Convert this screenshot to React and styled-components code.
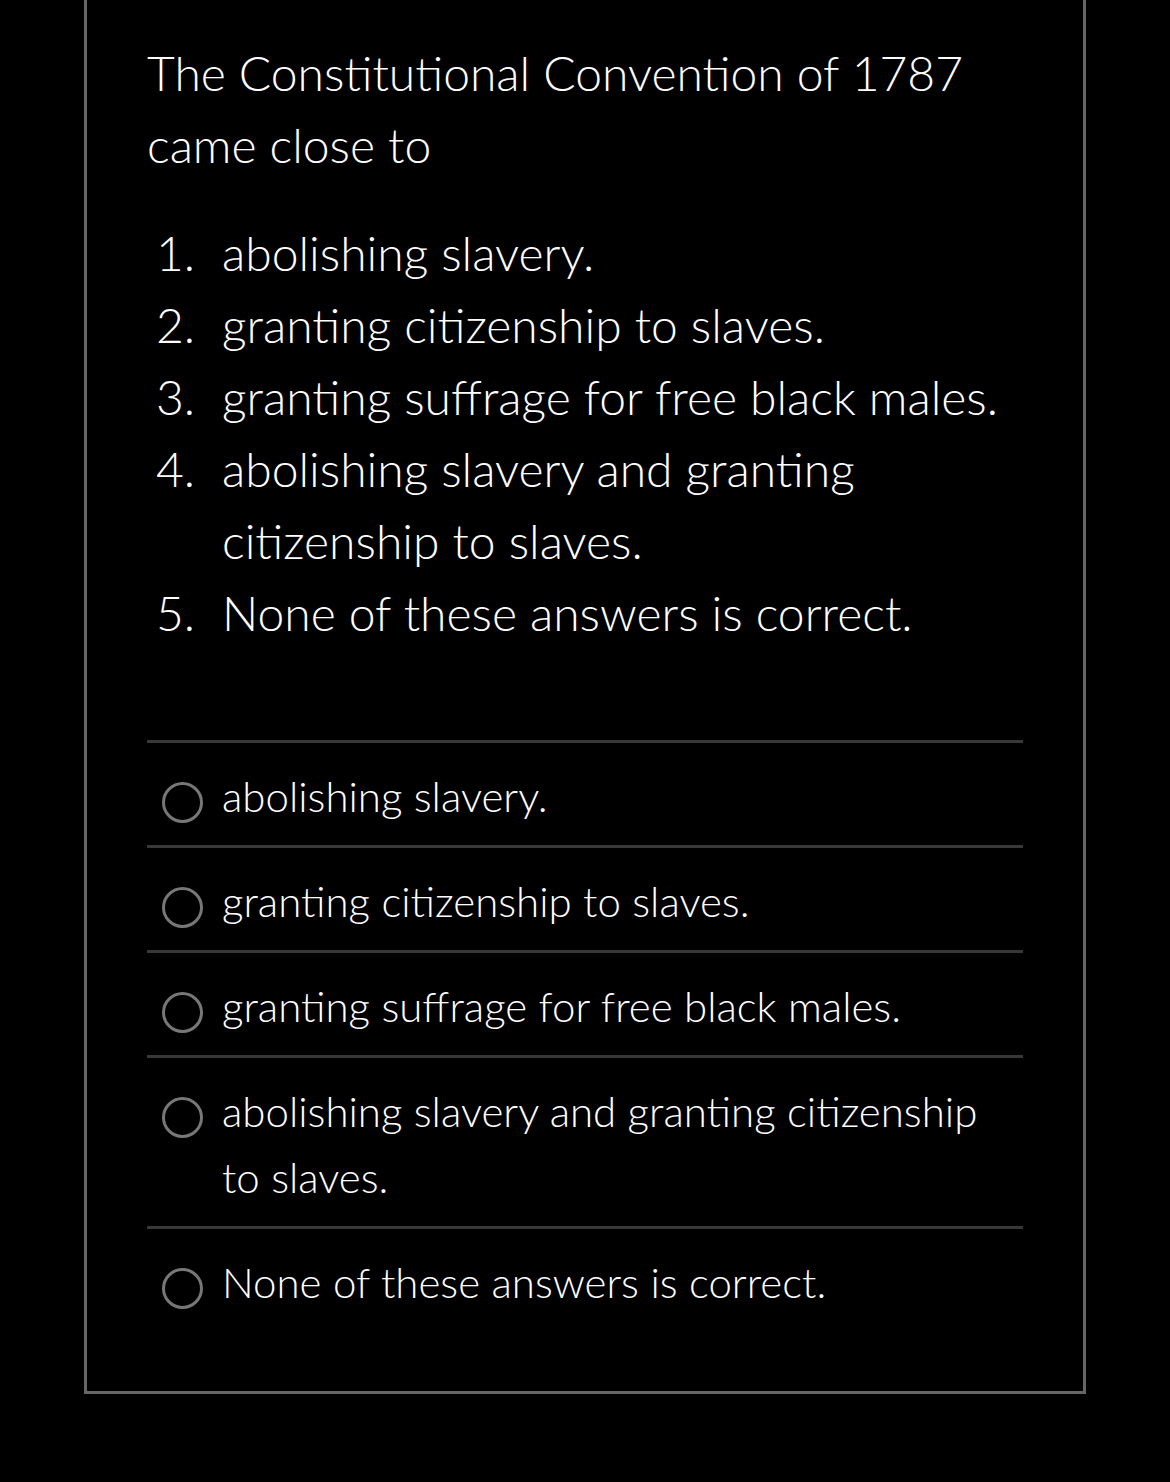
import styled, { createGlobalStyle } from 'styled-components';

const GlobalStyle = createGlobalStyle`
  html, body {
    margin: 0;
    padding: 0;
    background: #000;
  }
  body {
    font-family: "Lato Light", Lato, "Open Sans", sans-serif;
    color: #fff;
  }
`;

const items = [
  'abolishing slavery.',
  'granting citizenship to slaves.',
  'granting suffrage for free black males.',
  'abolishing slavery and granting citizenship to slaves.',
  'None of these answers is correct.'
];

const App = () => (
  <Page>
    <GlobalStyle />
    <Card>
      <Question>The Constitutional Convention of 1787 came close to</Question>
      <Choices>
        {items.map((text, i) => (
          <Choice key={i}>
            <Num>{i + 1}.</Num>
            <span>{text}</span>
          </Choice>
        ))}
      </Choices>
      <Options>
        {items.map((text, i) => (
          <Option key={i}>
            <Radio />
            <OptionText>{text}</OptionText>
          </Option>
        ))}
      </Options>
    </Card>
  </Page>
);

// Styled components
const Page = styled.div`
  background: #000;
  min-height: 1482px;
  padding-bottom: 89px;
  box-sizing: border-box;
`;

const Card = styled.div`
  border: 3px solid #666;
  border-top: none;
  box-sizing: border-box;
  margin: 0 auto;
  padding: 37px 60px 60px;
  width: 1002px;
`;

const Question = styled.p`
  font-size: 48px;
  font-weight: 300;
  line-height: 72px;
  margin: 0 0 36px;
`;

const Choices = styled.ol`
  list-style: none;
  margin: 0 0 91px;
  padding: 0;
`;

const Choice = styled.li`
  display: grid;
  font-size: 48px;
  font-weight: 300;
  grid-template-columns: 75px 1fr;
  line-height: 72px;
`;

const Num = styled.span`
  padding-left: 9px;
`;

const Options = styled.div`
  display: flex;
  flex-direction: column;
`;

const Option = styled.label`
  align-items: flex-start;
  border-top: 3px solid #383838;
  display: flex;
  gap: 19px;
  padding: 18px 0 18px 15px;
`;

const Radio = styled.span`
  border: 3px solid #777;
  border-radius: 50%;
  box-sizing: border-box;
  flex: 0 0 41px;
  height: 41px;
  margin-top: 21px;
  width: 41px;
`;

const OptionText = styled.span`
  font-size: 42px;
  font-weight: 300;
  line-height: 66px;
  margin: 2px 0 -2px;
`;

export default App;
